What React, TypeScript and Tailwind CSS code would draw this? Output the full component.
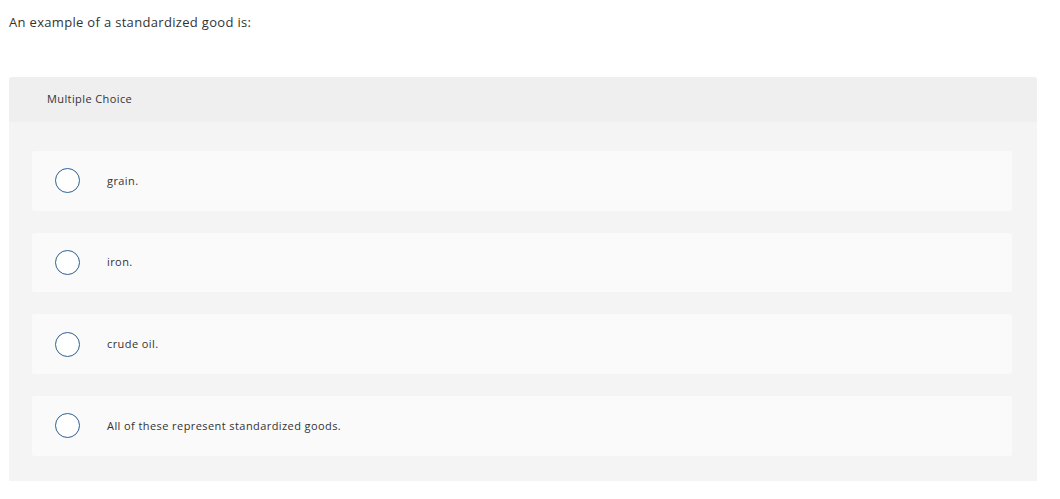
const options = [
  "grain.",
  "iron.",
  "crude oil.",
  "All of these represent standardized goods.",
];

const App = () => {
  return (
    <div className="min-h-screen bg-white font-['Open_Sans','Liberation_Sans',sans-serif] text-[#333]">
      <div className="px-[9px] pt-[13px]">
        <p className="text-[13px] leading-[18px] tracking-[0.32px]">An example of a standardized good is:</p>
      </div>

      <div className="mt-[46px] ml-[9px] w-[1028px] rounded-t-[3px] bg-[#f4f4f4]">
        {/* Header */}
        <div className="flex h-[45px] items-center rounded-t-[3px] bg-[#efefef] pl-[38px]">
          <span className="text-[11px] tracking-[0.4px]">Multiple Choice</span>
        </div>

        {/* Options */}
        <div className="flex flex-col gap-[22px] pl-[23px] pr-[25px] pt-[29px] pb-[25px]">
          {options.map((opt) => (
            <label
              key={opt}
              className="flex h-[59.7px] cursor-pointer items-center rounded-[3px] bg-[#fafafa] pl-[23px]"
            >
              <span className="h-[25px] w-[25px] shrink-0 rounded-full border-[1.5px] border-[#2d5f93] bg-white" />
              <span className="ml-[27px] text-[11px] tracking-[0.42px]">{opt}</span>
            </label>
          ))}
        </div>
      </div>
    </div>
  );
};

export default App;
